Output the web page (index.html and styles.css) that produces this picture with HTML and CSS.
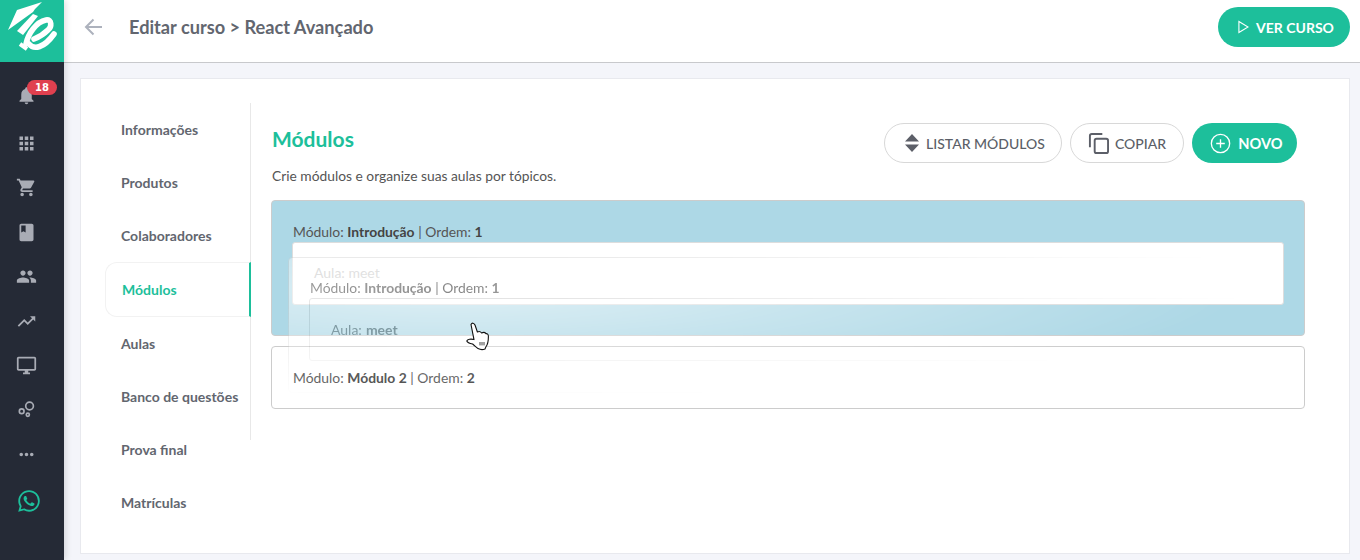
FILE: index.html
```html
<!DOCTYPE html>
<html lang="pt-BR">
<head>
<meta charset="utf-8">
<title>Editar curso</title>
<link rel="stylesheet" href="styles.css">
</head>
<body>
<aside class="sidebar">
  <div class="logo">
    <svg width="64" height="62" viewBox="0 0 64 62">
      <path class="logo-fill" d="M8 30 17 10 42 2 35 9 33 12Z"/>
      <path class="logo-fill" d="M33 14 38 16 23 35 17 31Z"/>
      <path class="logo-line" d="M26 44C28 34 36 22 46 20C52 19 52 27 48 30C44 34 39 37 34 39"/>
      <path class="logo-line" d="M29 44C34 50 44 48 54 34"/>
      <path class="logo-line thin" d="M20 44 27 49"/>
    </svg>
  </div>
  <nav class="side-icons">
    <div class="side-item side-first">
      <svg class="ic" viewBox="0 0 24 24"><path d="M12 22c1.1 0 2-.9 2-2h-4c0 1.1.9 2 2 2zm6-6v-5c0-3.07-1.63-5.64-4.5-6.32V4c0-.83-.67-1.5-1.5-1.5s-1.5.67-1.5 1.5v.68C7.64 5.36 6 7.92 6 11v5l-2 2v1h16v-1l-2-2z"/></svg>
      <span class="badge">18</span>
    </div>
    <div class="side-item"><svg class="ic" viewBox="0 0 24 24"><path d="M4 8h4V4H4v4zm6 12h4v-4h-4v4zm-6 0h4v-4H4v4zm0-6h4v-4H4v4zm6 0h4v-4h-4v4zm6-10v4h4V4h-4zm-6 4h4V4h-4v4zm6 6h4v-4h-4v4zm0 6h4v-4h-4v4z"/></svg></div>
    <div class="side-item"><svg class="ic" viewBox="0 0 24 24"><path d="M7 18c-1.1 0-1.99.9-1.99 2S5.9 22 7 22s2-.9 2-2-.9-2-2-2zM1 2v2h2l3.6 7.59-1.35 2.45c-.16.28-.25.61-.25.96 0 1.1.9 2 2 2h12v-2H7.42c-.14 0-.25-.11-.25-.25l.03-.12.9-1.63h7.45c.75 0 1.41-.41 1.75-1.03l3.58-6.49c.08-.14.12-.31.12-.48 0-.55-.45-1-1-1H5.21l-.94-2H1zm16 16c-1.1 0-1.99.9-1.99 2s.89 2 1.99 2 2-.9 2-2-.9-2-2-2z"/></svg></div>
    <div class="side-item"><svg class="ic" viewBox="0 0 24 24"><path d="M18 2H6c-1.1 0-2 .9-2 2v16c0 1.1.9 2 2 2h12c1.1 0 2-.9 2-2V4c0-1.1-.9-2-2-2zM6 4h5v8l-2.5-1.5L6 12V4z"/></svg></div>
    <div class="side-item"><svg class="ic" viewBox="0 0 24 24"><path d="M16 11c1.66 0 2.99-1.34 2.99-3S17.66 5 16 5c-1.66 0-3 1.34-3 3s1.34 3 3 3zm-8 0c1.66 0 2.99-1.34 2.99-3S9.66 5 8 5C6.34 5 5 6.34 5 8s1.34 3 3 3zm0 2c-2.33 0-7 1.17-7 3.5V19h14v-2.5c0-2.33-4.67-3.5-7-3.5zm8 0c-.29 0-.62.02-.97.05 1.16.84 1.97 1.97 1.97 3.45V19h6v-2.5c0-2.33-4.67-3.5-7-3.5z"/></svg></div>
    <div class="side-item"><svg class="ic" viewBox="0 0 24 24"><path d="M16 6l2.29 2.29-4.88 4.88-4-4L2 16.59 3.41 18l6-6 4 4 6.3-6.29L22 12V6z"/></svg></div>
    <div class="side-item"><svg class="ic" viewBox="0 0 24 24"><path d="M21 2H3c-1.1 0-2 .9-2 2v12c0 1.1.9 2 2 2h7v2H8v2h8v-2h-2v-2h7c1.1 0 2-.9 2-2V4c0-1.1-.9-2-2-2zm0 14H3V4h18v12z"/></svg></div>
    <div class="side-item"><svg class="ic ic-stroke" viewBox="0 0 24 24"><circle cx="15.5" cy="8" r="4.4"/><circle cx="6.5" cy="14" r="2.7"/><circle cx="13.5" cy="18" r="1.8"/></svg></div>
    <div class="side-item"><svg class="ic" viewBox="0 0 24 24"><path d="M6 10c-1.1 0-2 .9-2 2s.9 2 2 2 2-.9 2-2-.9-2-2-2zm12 0c-1.1 0-2 .9-2 2s.9 2 2 2 2-.9 2-2-.9-2-2-2zm-6 0c-1.1 0-2 .9-2 2s.9 2 2 2 2-.9 2-2-.9-2-2-2z"/></svg></div>
    <div class="side-item whats"><svg class="ic-whats" viewBox="0 0 24 24"><path d="M12.04 2C6.58 2 2.13 6.45 2.13 11.91c0 1.75.46 3.45 1.32 4.95L2.05 22l5.25-1.38c1.45.79 3.08 1.21 4.74 1.21 5.46 0 9.91-4.45 9.91-9.91 0-2.65-1.03-5.14-2.9-7.01A9.816 9.816 0 0 0 12.04 2zm.01 1.67c2.2 0 4.26.86 5.82 2.42a8.225 8.225 0 0 1 2.41 5.83c0 4.54-3.7 8.23-8.24 8.23-1.48 0-2.93-.39-4.19-1.15l-.3-.17-3.12.82.83-3.04-.2-.32a8.188 8.188 0 0 1-1.26-4.38c.01-4.54 3.7-8.24 8.25-8.24zM8.53 7.33c-.16 0-.43.06-.66.31-.22.25-.87.86-.87 2.07 0 1.22.89 2.39 1 2.56.14.17 1.76 2.67 4.25 3.73.59.27 1.05.42 1.41.53.59.19 1.13.16 1.56.1.48-.07 1.46-.6 1.67-1.18.21-.58.21-1.07.15-1.18-.07-.1-.23-.16-.48-.27-.25-.14-1.47-.74-1.69-.82-.23-.08-.37-.12-.56.12-.16.25-.64.81-.78.97-.15.17-.29.19-.53.07-.26-.13-1.06-.39-2-1.23-.74-.66-1.23-1.47-1.38-1.72-.12-.24-.01-.39.11-.5.11-.11.27-.29.37-.44.13-.14.17-.25.25-.41.08-.17.04-.31-.02-.43-.06-.11-.56-1.35-.77-1.84-.2-.48-.4-.42-.56-.43-.14 0-.3-.01-.47-.01z"/></svg></div>
  </nav>
</aside>
<div class="main">
  <header class="topbar">
    <svg class="back" viewBox="0 0 20 20"><path d="M18.5 10H2.5M10 2.5 2.5 10 10 17.5"/></svg>
    <h1 class="page-title">Editar curso &gt; React Avançado</h1>
    <button class="btn btn-primary btn-ver">
      <svg class="play" viewBox="0 0 12 14"><path d="M1 1 11 7 1 13Z"/></svg>
      VER CURSO
    </button>
  </header>
  <main class="content">
    <section class="card">
      <nav class="tabs">
        <a class="tab">Informações</a>
        <a class="tab">Produtos</a>
        <a class="tab">Colaboradores</a>
        <a class="tab tab-active">Módulos</a>
        <a class="tab">Aulas</a>
        <a class="tab">Banco de questões</a>
        <a class="tab">Prova final</a>
        <a class="tab">Matrículas</a>
      </nav>
      <div class="panel">
        <div class="panel-head">
          <div class="panel-text">
            <h2 class="panel-title">Módulos</h2>
            <p class="panel-sub">Crie módulos e organize suas aulas por tópicos.</p>
          </div>
          <div class="actions">
            <button class="btn btn-outline btn-listar">
              <svg class="ic-sort" viewBox="0 0 14 18"><path d="M7 0 14 7.6H0ZM0 10.4H14L7 18Z"/></svg>
              LISTAR MÓDULOS
            </button>
            <button class="btn btn-outline btn-copiar">
              <svg class="ic-copy" viewBox="0 0 22 22"><path class="copy-a" d="M2 15V3a2 2 0 0 1 2-2h11"/><rect class="copy-b" x="7" y="6" width="14" height="15" rx="2"/></svg>
              COPIAR
            </button>
            <button class="btn btn-primary btn-novo">
              <svg class="ic-plus" viewBox="0 0 22 22"><circle cx="11" cy="11" r="9.6"/><path d="M11 6.5v9M6.5 11h9"/></svg>
              NOVO
            </button>
          </div>
        </div>
        <div class="modules">
          <article class="module module-over">
            <p class="module-line">Módulo: <b>Introdução</b> | Ordem: <b>1</b></p>
            <div class="lesson lesson-origin">Aula: meet</div>
          </article>
          <article class="module">
            <p class="module-line">Módulo: <b>Módulo 2</b> | Ordem: <b>2</b></p>
          </article>
          <div class="ghost">
            <p class="module-line">Módulo: <b>Introdução</b> | Ordem: <b>1</b></p>
            <div class="lesson">Aula: <b class="normal-b">meet</b></div>
          </div>
          <svg class="hand" viewBox="0 0 23 29"><path d="M5 2.5C6 .5 8 .8 9 3L11.4 10C13 9.2 14.6 9.6 15.6 11C17.4 10 19 10.4 20 11.6C21.4 11.4 22.4 12.6 22.4 14.4C22.4 18 22 22 20 24.6L19 27C16.6 28 14 27.6 12 26.6C10 25 8.4 23.4 6.6 22C4.4 21.6 1.4 20.8.8 19C1.4 17.2 5 16.6 8 17.6L7.4 14.6Z"/><path class="hand-in" d="M14 20v3.4M16 20v3.4M18 20v3.4"/></svg>
        </div>
      </div>
    </section>
  </main>
</div>
</body>
</html>
```
FILE: styles.css
```css
* { box-sizing: border-box; }
html, body { height: 100%; }
body {
  margin: 0;
  display: flex;
  height: 560px;
  overflow: hidden;
  font-family: "Lato", "Liberation Sans", sans-serif;
  font-size: 14px;
  color: #555;
  background: #f4f5fa;
}
.sidebar {
  flex: 0 0 64px;
  background: #252a36;
  box-shadow: 2px 0 6px rgba(0,0,0,.12);
  position: relative;
  z-index: 2;
}
.logo { height: 62px; background: #1dbf9b; }
.logo svg { display: block; }
.logo-fill { fill: #fff; }
.logo-line { fill: none; stroke: #fff; stroke-width: 5.6; stroke-linecap: round; stroke-linejoin: round; }
.logo-line.thin { stroke-width: 4; stroke-linecap: butt; }
.side-icons { display: flex; flex-direction: column; padding-top: 11px; }
.side-item {
  position: relative;
  height: 44.4px;
  display: flex;
  align-items: center;
  justify-content: center;
  margin-right: 11px;
}
.side-first { margin-bottom: 4px; }
.ic { width: 21px; height: 21px; fill: #a9acb5; }
.ic-stroke { fill: none; stroke: #a9acb5; stroke-width: 1.9; }
.whats { margin: 2px 6px 0 0; }
.ic-whats { width: 26px; height: 26px; fill: #1dbf9b; }
.badge {
  position: absolute;
  left: 27px;
  top: 7px;
  width: 30px;
  height: 15px;
  border-radius: 8px;
  background: #e0404f;
  color: #fff;
  font-weight: 700;
  line-height: 15px;
  text-align: center;
  font-family: "DejaVu Sans", sans-serif;
  font-size: 10px;
}
.main { flex: 1; display: flex; flex-direction: column; min-width: 0; }
.topbar {
  height: 63px;
  flex: none;
  display: flex;
  align-items: center;
  background: #fff;
  border-bottom: 1px solid #c8c9cc;
  padding: 0 10px 8px 19px;
}
.back { width: 21px; height: 20px; fill: none; stroke: #adb2bd; stroke-width: 2; }
.page-title {
  margin: 0 0 0 25px;
  flex: 1;
  font-size: 18.2px;
  font-weight: 700;
  color: #62666f;
}
.btn {
  display: inline-flex;
  align-items: center;
  justify-content: center;
  height: 40px;
  border-radius: 20px;
  font-family: inherit;
  font-size: 14px;
  padding: 0;
}
.btn-primary { background: #1dbf9b; border: 0; color: #fff; font-weight: 700; }
.btn-outline { background: #fff; border: 1px solid #d8d8d8; color: #5c5f68; font-weight: 500; }
.btn-ver { width: 132px; gap: 7px; padding-left: 4px; }
.play { width: 11px; height: 14px; fill: none; stroke: #fff; stroke-width: 1.2; }
.content { flex: 1; padding: 15px 10px 6px 16px; min-height: 0; }
.card {
  height: 100%;
  display: flex;
  align-items: flex-start;
  background: #fff;
  border: 1px solid #e8e9ee;
  padding: 24px 44px 0 24px;
}
.tabs {
  position: relative;
  flex: 0 0 146px;
  display: flex;
  flex-direction: column;
}
.tabs::after {
  content: "";
  position: absolute;
  right: 0;
  top: 0;
  width: 1px;
  height: 337px;
  background: #e8e8e8;
}
.tab {
  height: 53px;
  display: flex;
  align-items: center;
  padding-left: 16px;
  font-size: 14px;
  font-weight: 700;
  color: #62666f;
  white-space: nowrap;
}
.tab-active {
  position: relative;
  z-index: 1;
  height: 55px;
  color: #1dbf9b;
  border: 1px solid #f2f2f2;
  border-right: 2px solid #1dbf9b;
  border-radius: 12px 0 0 12px;
}
.panel { flex: 1; min-width: 0; margin-left: 20px; padding-top: 20px; }
.panel-head { display: flex; justify-content: space-between; height: 77px; padding-right: 8px; }
.panel-text { padding-left: 1px; }
.panel-title { margin: 3px 0 0; font-size: 21px; font-weight: 700; color: #1dbf9b; line-height: 26px; }
.panel-sub { margin: 14px 0 0; font-size: 13.8px; line-height: 20px; color: #555; }
.actions { display: flex; gap: 8px; }
.btn-listar { width: 178px; gap: 7px; padding-left: 4px; }
.btn-copiar { width: 114px; gap: 6px; }
.btn-novo { width: 105px; gap: 7px; font-size: 14.6px; padding-left: 4px; }
.ic-sort { width: 14px; height: 18px; fill: #5c5f68; }
.ic-copy { width: 21px; height: 21px; fill: none; stroke: #5c5f68; stroke-width: 2; }
.ic-plus { width: 21px; height: 21px; fill: none; stroke: #fff; stroke-width: 1.4; }
.modules { position: relative; display: flex; flex-direction: column; gap: 10px; }
.module {
  border: 1px solid #ccc;
  border-radius: 4px;
  padding: 21px 20px 20px;
  background: #fff;
}
.module-over { background: #add8e6; padding-bottom: 30px; }
.module-line { margin: 0; padding-left: 1px; height: 20px; line-height: 20px; font-size: 13.9px; color: #555; }
.module-line b { font-weight: 700; color: #444; }
.lesson {
  height: 63px;
  padding: 0 0 2px 21px;
  display: flex;
  align-items: center;
  background: #fff;
  border: 1px solid #ddd;
  border-radius: 3px;
}
.lesson-origin { color: #c4c4c4; }
.normal-b { font-weight: 700; margin-left: 4px; }
.ghost {
  position: absolute;
  left: 17px;
  top: 57px;
  width: 1034px;
  height: 136px;
  padding: 20px 20px 0 21px;
  border: 1px solid #ccc;
  background: #fff;
  border-radius: 4px;
  color: #333;
  -webkit-mask-image: radial-gradient(800px 110px at 162px 33px, rgba(0,0,0,.6), transparent);
  mask-image: radial-gradient(800px 110px at 162px 33px, rgba(0,0,0,.6), transparent);
  pointer-events: none;
}
.ghost .module-line { color: #333; padding-left: 0; }
.ghost .lesson { margin: 0 0 0 -1px; padding-bottom: 0; border-color: #ccc; }
.hand {
  position: absolute;
  left: 195px;
  top: 122px;
  width: 23px;
  height: 29px;
  fill: #fff;
  stroke: #111;
  stroke-width: 1.1;
  stroke-linejoin: round;
}
.hand-in { fill: none; stroke-width: .8; }
```
